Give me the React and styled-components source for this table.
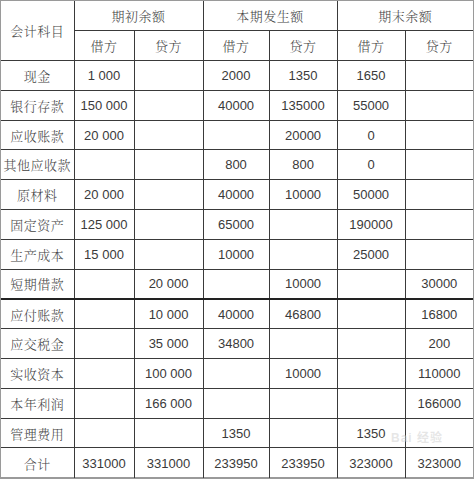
import React from "react";
import styled, { createGlobalStyle } from "styled-components";

const Global = createGlobalStyle`
  html, body { margin: 0; padding: 0; background: #fff; }
  body { width: 474px; height: 479px; overflow: hidden; }
`;

const Frame = styled.div`
  position: relative;
  width: 474px;
  height: 479px;
  box-sizing: border-box;
  border-top: 1px solid #9a9a9a;
  border-left: 1px solid #9a9a9a;
  border-right: 1px solid #9a9a9a;
  border-bottom: 2px solid #9a9a9a;
  background: #fff;
`;

const Table = styled.table`
  border-collapse: collapse;
  table-layout: fixed;
  width: 472px;
  font-family: "Liberation Sans", "Noto Serif CJK SC", "Noto Sans CJK SC", sans-serif;
  font-size: 13px;
  color: #3c3c3c;
`;

const Row = styled.tr`
  height: 29.8px;
`;

const Cell = styled.td`
  border: 1px solid #3a3a3a;
  border-bottom: ${(p) => (p.$thick ? "2px solid #222" : "1px solid #3a3a3a")};
  text-align: center;
  vertical-align: middle;
  padding: 0;
  white-space: pre;
  overflow: hidden;
  font-family: ${(p) =>
    p.$cjk
      ? '"Noto Serif CJK SC", "Noto Sans CJK SC", sans-serif'
      : '"Liberation Sans", Arial, sans-serif'};
  font-weight: ${(p) => (p.$cjk ? 300 : 400)};
  letter-spacing: ${(p) => (p.$cjk ? "0.5px" : "0")};
  color: ${(p) => (p.$cjk ? "#444" : "#3a3a3a")};
  ${(p) => p.$edgeTop && "border-top: none;"}
  ${(p) => p.$edgeLeft && "border-left: none;"}
  ${(p) => p.$edgeRight && "border-right: none;"}
  ${(p) => p.$edgeBottom && "border-bottom: none;"}
`;

const Watermark = styled.div`
  position: absolute;
  right: 30px;
  bottom: 33px;
  font-family: "Liberation Sans", "Noto Sans CJK SC", sans-serif;
  font-size: 12px;
  font-weight: 700;
  line-height: 12px;
  color: rgba(205, 205, 205, 0.5);
  letter-spacing: 1px;
  pointer-events: none;
`;

const rows = [
  ["现金", "1 000", "", "2000", "1350", "1650", ""],
  ["银行存款", "150 000", "", "40000", "135000", "55000", ""],
  ["应收账款", "20 000", "", "", "20000", "0", ""],
  ["其他应收款", "", "", "800", "800", "0", ""],
  ["原材料", "20 000", "", "40000", "10000", "50000", ""],
  ["固定资产", "125 000", "", "65000", "", "190000", ""],
  ["生产成本", "15 000", "", "10000", "", "25000", ""],
  ["短期借款", "", "20 000", "", "10000", "", "30000"],
  ["应付账款", "", "10 000", "40000", "46800", "", "16800"],
  ["应交税金", "", "35 000", "34800", "", "", "200"],
  ["实收资本", "", "100 000", "", "10000", "", "110000"],
  ["本年利润", "", "166 000", "", "", "", "166000"],
  ["管理费用", "", "", "1350", "", "1350", ""],
  ["合计", "331000", "331000", "233950", "233950", "323000", "323000"],
];

const widths = [73, 60, 69, 66, 68, 68, 68];

export default function App() {
  return (
    <>
      <Global />
      <Frame>
        <Table>
          <colgroup>
            {widths.map((w, i) => (
              <col key={i} style={{ width: w }} />
            ))}
          </colgroup>
          <thead>
            <Row>
              <Cell $cjk rowSpan={2} $edgeTop $edgeLeft>会计科目</Cell>
              <Cell $cjk colSpan={2} $edgeTop>期初余额</Cell>
              <Cell $cjk colSpan={2} $edgeTop>本期发生额</Cell>
              <Cell $cjk colSpan={2} $edgeTop $edgeRight>期末余额</Cell>
            </Row>
            <Row>
              <Cell $cjk>借方</Cell>
              <Cell $cjk>贷方</Cell>
              <Cell $cjk>借方</Cell>
              <Cell $cjk>贷方</Cell>
              <Cell $cjk>借方</Cell>
              <Cell $cjk $edgeRight>贷方</Cell>
            </Row>
          </thead>
          <tbody>
            {rows.map((r, ri) => (
              <Row key={ri}>
                {r.map((v, ci) => (
                  <Cell
                    key={ci}
                    $cjk={ci === 0}
                    $thick={ri === 7}
                    $edgeLeft={ci === 0}
                    $edgeRight={ci === 6}
                    $edgeBottom={ri === rows.length - 1}
                  >
                    {v}
                  </Cell>
                ))}
              </Row>
            ))}
          </tbody>
        </Table>
        <Watermark>Bai 经验</Watermark>
      </Frame>
    </>
  );
}
